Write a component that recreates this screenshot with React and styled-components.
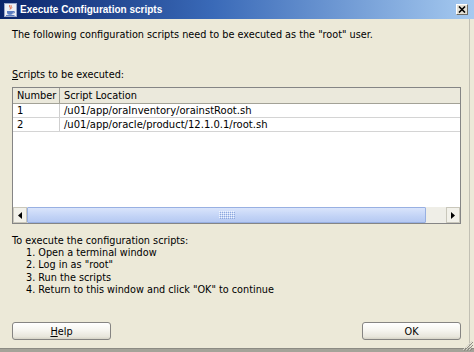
import React from "react";
import styled, { createGlobalStyle } from "styled-components";

const Global = createGlobalStyle`
  html, body { margin: 0; padding: 0; background: #ece9d8; }
  * { box-sizing: border-box; }
`;

const Window = styled.div`
  position: relative;
  width: 474px;
  height: 352px;
  display: flex;
  flex-direction: column;
  background: #ece9d8;
  font-family: "DejaVu Sans", sans-serif;
  color: #000;
  overflow: hidden;
`;

const TitleBar = styled.div`
  height: 19px;
  flex: none;
  display: flex;
  align-items: center;
  padding: 0 6px 0 4px;
  background: linear-gradient(to right, #0a246a 0%, #3a6ab8 45%, #a6caf0 100%);
`;

const TitleText = styled.span`
  margin-left: 3px;
  font-family: "Liberation Sans", Arial, sans-serif;
  font-weight: bold;
  font-size: 10px;
  color: #fff;
  flex: 1;
  white-space: nowrap;
`;

const CloseButton = styled.div`
  width: 12px;
  height: 11px;
  display: flex;
  align-items: center;
  justify-content: center;
  background: #e4e1d6;
  border: 1px solid;
  border-color: #fff #6e6c64 #6e6c64 #fff;
`;

const Body = styled.div`
  flex: 1;
  display: flex;
`;

const Content = styled.div`
  flex: 1;
  display: flex;
  flex-direction: column;
  padding: 9px 8px 8px 12px;
  border-right: 1px solid #c2c0b4;
`;

const RightEdge = styled.div`
  width: 4px;
  flex: none;
  background: #ece9d8;
`;

const BottomEdge = styled.div`
  height: 4px;
  flex: none;
  background: #a4a399;
  border-top: 1px solid #8c8b83;
`;

const Text = styled.div`
  font-size: 9.7px;
  line-height: 13px;
  white-space: nowrap;
  margin-top: ${(p) => p.$mt || 0}px;
`;

const Step = styled.div`
  font-size: 9.7px;
  line-height: 12.3px;
  white-space: nowrap;
  padding-left: 14px;
`;

const Mnemonic = styled.span`
  text-decoration: underline;
  text-underline-offset: 1px;
`;

const TableBox = styled.div`
  margin-top: 6px;
  height: 137px;
  width: 449px;
  display: flex;
  flex-direction: column;
  border: 1px solid #858585;
  background: #fff;
`;

const HeaderRow = styled.div`
  display: flex;
  height: 16px;
  flex: none;
  background: #ebe9dc;
  border-bottom: 1px solid #a3a297;
`;

const Row = styled.div`
  display: flex;
  height: 14px;
  flex: none;
  border-bottom: 1px solid #d4d4d4;
`;

const Cell = styled.div`
  font-size: ${(p) => (p.$head ? "9.8px" : "10px")};
  line-height: ${(p) => (p.$head ? "15px" : "13px")};
  white-space: nowrap;
  padding-left: 4px;
  width: ${(p) => (p.$w ? p.$w + "px" : "auto")};
  flex: ${(p) => (p.$w ? "none" : "1")};
  border-right: ${(p) =>
    p.$w ? (p.$head ? "1px solid #a3a297" : "1px solid #cfcfcf") : "none"};
`;

const Filler = styled.div`
  flex: 1;
`;

const ScrollBar = styled.div`
  height: 16px;
  flex: none;
  display: flex;
  background: #efeee7;
`;

const ScrollButton = styled.div`
  width: 14px;
  flex: none;
  display: flex;
  align-items: center;
  justify-content: center;
  background: #f2f1ea;
  border: 1px solid #c9c7bb;
`;

const Thumb = styled.div`
  width: 399px;
  flex: none;
  display: flex;
  align-items: center;
  justify-content: center;
  background: linear-gradient(#d9e4fb, #c2d3f6 60%, #b6c9f2);
  border: 1px solid #98b0e2;
  border-radius: 1px;
`;

const Track = styled.div`
  flex: 1;
  background: #efeee7;
`;

const ButtonRow = styled.div`
  margin-top: auto;
  display: flex;
  justify-content: space-between;
  width: 449px;
`;

const Button = styled.div`
  width: 99px;
  height: 18px;
  display: flex;
  align-items: center;
  justify-content: center;
  font-size: 9.7px;
  border: 1px solid #858482;
  border-radius: 3px;
  background: linear-gradient(#ffffff, #f6f5f0 45%, #e8e6dc 85%, #d6d3c6);
`;

const Grip = styled.svg`
  position: absolute;
  right: 1px;
  bottom: 1px;
`;

function JavaIcon() {
  return (
    <svg width="13" height="14" viewBox="0 0 13 14">
      <rect x="0.5" y="0.5" width="12" height="13" fill="#eef0f6" stroke="#9aa6c8" />
      <path d="M6 2 C4.5 3.5 7.5 4.5 6 6.5" stroke="#e0562a" fill="none" strokeWidth="1" />
      <path d="M7.5 2.5 C6.5 3.5 8.5 4.2 7.5 5.5" stroke="#e0562a" fill="none" strokeWidth="0.8" />
      <path d="M3 8 h6 v1.5 a2.2 2.2 0 0 1 -2.2 2.2 h-1.6 a2.2 2.2 0 0 1 -2.2 -2.2z" fill="#5a7bbf" />
      <path d="M9 8.5 h1.3 v1.4 h-1.3" stroke="#5a7bbf" fill="none" />
      <path d="M2 12.5 h8.5" stroke="#5a7bbf" />
    </svg>
  );
}

export default function App() {
  return (
    <>
      <Global />
      <Window>
        <TitleBar>
          <JavaIcon />
          <TitleText>Execute Configuration scripts</TitleText>
          <CloseButton>
            <svg width="8" height="7" viewBox="0 0 8 7">
              <path d="M1 0.5 L7 6.5 M7 0.5 L1 6.5" stroke="#000" strokeWidth="1.6" />
            </svg>
          </CloseButton>
        </TitleBar>
        <Body>
          <Content>
            <Text>The following configuration scripts need to be executed as the "root" user.</Text>
            <Text $mt={27}>
              <Mnemonic>S</Mnemonic>cripts to be executed:
            </Text>
            <TableBox>
              <HeaderRow>
                <Cell $head $w={47}>Number</Cell>
                <Cell $head>Script Location</Cell>
              </HeaderRow>
              <Row>
                <Cell $w={47}>1</Cell>
                <Cell>/u01/app/oraInventory/orainstRoot.sh</Cell>
              </Row>
              <Row>
                <Cell $w={47}>2</Cell>
                <Cell>/u01/app/oracle/product/12.1.0.1/root.sh</Cell>
              </Row>
              <Filler />
              <ScrollBar>
                <ScrollButton>
                  <svg width="4" height="7" viewBox="0 0 4 7">
                    <path d="M4 0 L0 3.5 L4 7z" fill="#000" />
                  </svg>
                </ScrollButton>
                <Thumb>
                  <svg width="16" height="8" viewBox="0 0 16 8">
                    <defs>
                      <pattern id="dots" width="2" height="2" patternUnits="userSpaceOnUse">
                        <rect width="1" height="1" fill="#eef3fd" />
                        <rect x="1" y="1" width="1" height="1" fill="#8ea8dc" />
                      </pattern>
                    </defs>
                    <rect width="16" height="8" fill="url(#dots)" />
                  </svg>
                </Thumb>
                <Track />
                <ScrollButton>
                  <svg width="4" height="7" viewBox="0 0 4 7">
                    <path d="M0 0 L4 3.5 L0 7z" fill="#000" />
                  </svg>
                </ScrollButton>
              </ScrollBar>
            </TableBox>
            <Text $mt={10}>To execute the configuration scripts:</Text>
            <Step>1. Open a terminal window</Step>
            <Step>2. Log in as "root"</Step>
            <Step>3. Run the scripts</Step>
            <Step>4. Return to this window and click "OK" to continue</Step>
            <ButtonRow>
              <Button>
                <span>
                  <Mnemonic>H</Mnemonic>elp
                </span>
              </Button>
              <Button>OK</Button>
            </ButtonRow>
          </Content>
          <RightEdge />
        </Body>
        <BottomEdge />
        <Grip width="10" height="10" viewBox="0 0 10 10">
          <path d="M9 3 L3 9 M9 6 L6 9 M9 0 L0 9" stroke="#d8d6cc" strokeWidth="1" />
          <path d="M10 4 L4 10 M10 7 L7 10 M10 1 L1 10" stroke="#8d8b82" strokeWidth="1" />
        </Grip>
      </Window>
    </>
  );
}
